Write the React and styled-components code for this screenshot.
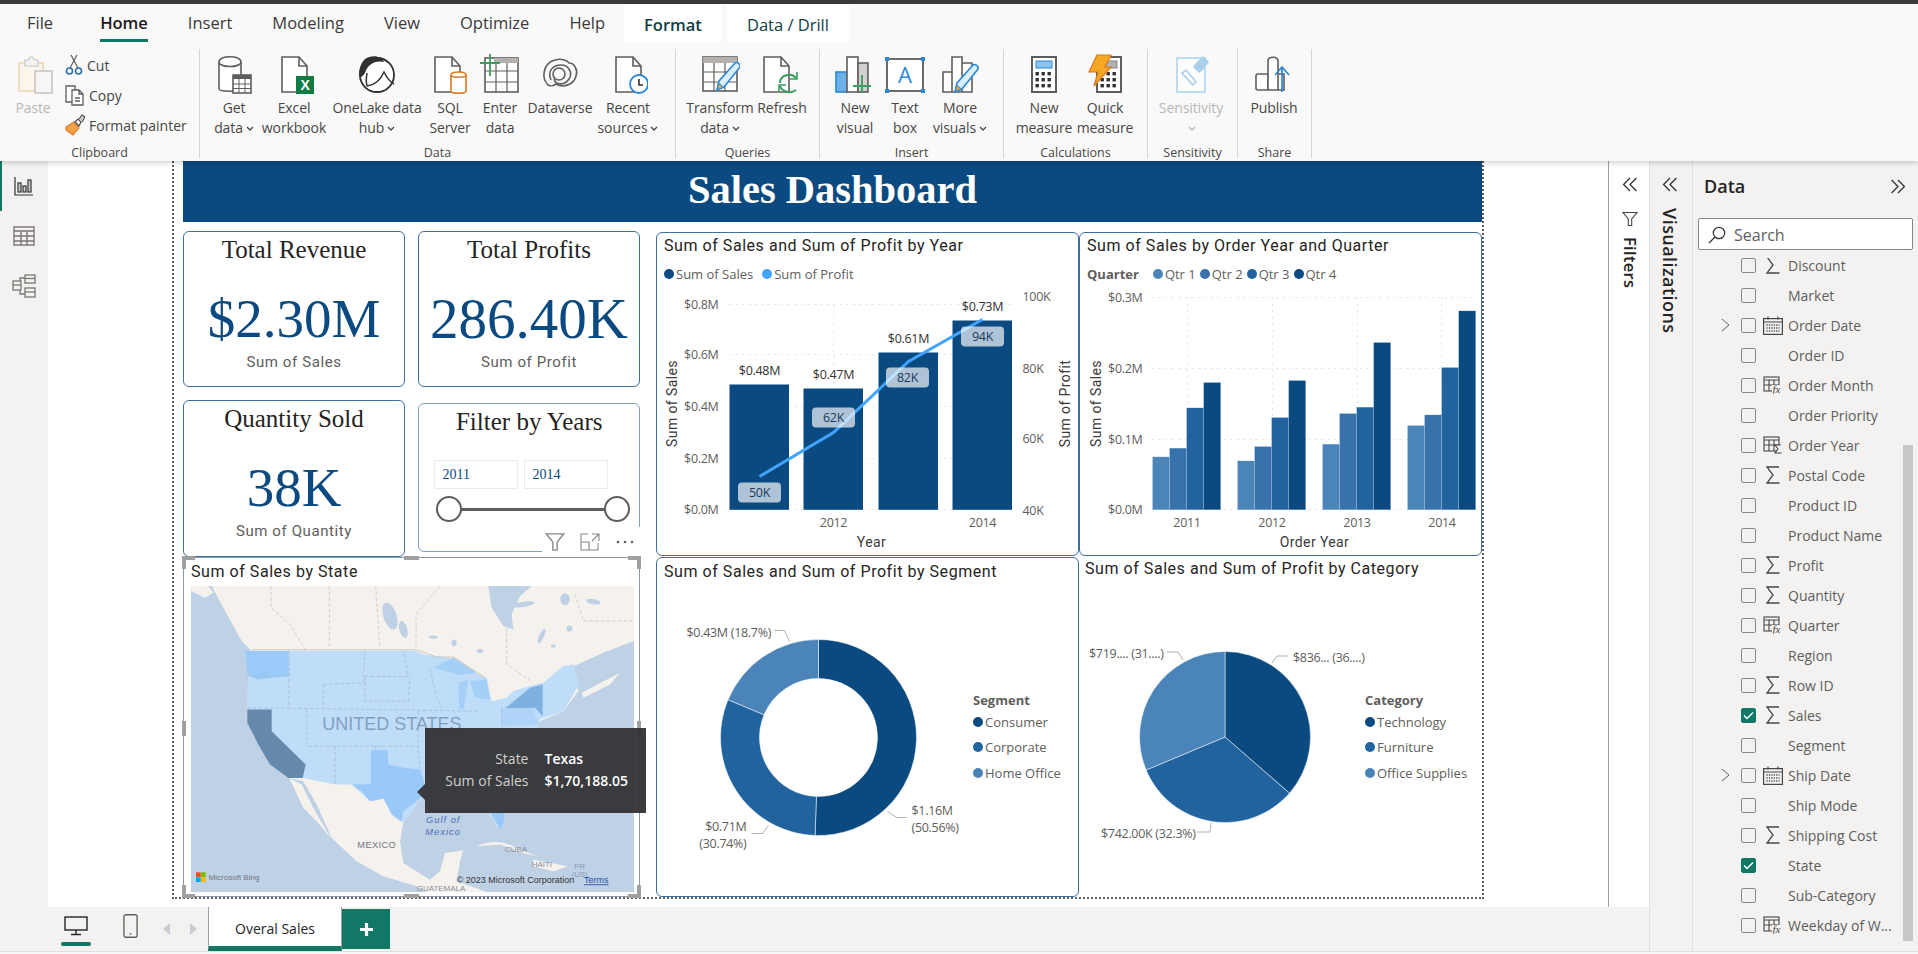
import React from "react";
import styled, { createGlobalStyle } from "styled-components";

const UI = `"Open Sans", "Noto Sans", sans-serif`;
const DIN = `Roboto, "Noto Sans", sans-serif`;
const SERIF = `"Liberation Serif", "DejaVu Serif", serif`;
const NAVY = "#0a4a80";
const INK = "#605e5c";
const GREEN = "#117865";

const Global = createGlobalStyle`
  html, body { margin: 0; padding: 0; background: #fff; overflow: hidden; }
  * { box-sizing: border-box; }
`;

const Page = styled.div`
  width: 1918px;
  height: 954px;
  display: flex;
  flex-direction: column;
  font-family: ${UI};
  color: #252423;
`;
const TopLine = styled.div`
  height: 4px;
  background: #3b3a39;
`;

/* ribbon */
const Ribbon = styled.header`
  height: 157px;
  background: #f9f9f9;
  box-shadow: 0 2px 5px rgba(0, 0, 0, 0.18);
  position: relative;
  z-index: 5;
`;
const TabRow = styled.nav`
  height: 38px;
  display: flex;
  align-items: stretch;
  gap: 40px;
  padding-left: 27px;
  font-size: 16.5px;
`;
const Tab = styled.div`
  display: flex;
  align-items: center;
  padding-top: 2px;
  color: ${(p) => (p.$active ? "#1b1a19" : "#3b3a39")};
  font-weight: ${(p) => (p.$active ? 600 : 400)};
  border-bottom: 3px solid ${(p) => (p.$active ? GREEN : "transparent")};
  margin-left: ${(p) => p.$shift || 0}px;
`;
const ContextTab = styled.div`
  display: flex;
  align-items: center;
  padding: 2px 20px 0;
  background: #fff;
  color: #0f3f46;
  font-weight: ${(p) => (p.$strong ? 600 : 500)};
  margin-left: ${(p) => p.$shift}px;
`;
const GroupRow = styled.div`
  display: flex;
  padding-top: 7px;
`;
const Group = styled.section`
  width: ${(p) => p.$w}px;
  height: 109px;
  border-right: 1px solid #d6d4d2;
  display: flex;
  flex-direction: column;
`;
const GroupBody = styled.div`
  flex: 1;
  display: flex;
  padding-left: ${(p) => p.$pad || 0}px;
`;
const GroupLabel = styled.div`
  height: 10px;
  line-height: 10px;
  font-size: 12.5px;
  text-align: center;
  color: #484644;
  white-space: nowrap;
`;
const RibbonBtn = styled.div`
  width: ${(p) => p.$w}px;
  display: flex;
  flex-direction: column;
  align-items: center;
  color: ${(p) => (p.$off ? "#b9b7b5" : "#484644")};
  font-size: 14px;
  line-height: 20px;
  text-align: center;
  white-space: nowrap;
  letter-spacing: -0.1px;
  svg.big {
    margin-top: 5px;
    margin-bottom: 4px;
    flex: none;
  }
`;
const SmallColumn = styled.div`
  display: flex;
  flex-direction: column;
  padding: 1px 0 0 7px;
`;
const SmallBtn = styled.div`
  height: 30px;
  display: flex;
  align-items: center;
  gap: 4px;
  font-size: 14px;
  color: #484644;
  white-space: nowrap;
`;
const Caret = () => (
  <svg width="8" height="6" viewBox="0 0 8 6" style={{ marginLeft: 3, verticalAlign: 1 }}>
    <path d="M1 1l3 3 3-3" fill="none" stroke="currentColor" strokeWidth="1.3" />
  </svg>
);

const Ico = ({ children, w = 40, h = 40 }) => (
  <svg className="big" width={w} height={h} viewBox={`0 0 ${w} ${h}`} fill="none" stroke={INK} strokeWidth="1.6">
    {children}
  </svg>
);
const Doc = ({ x = 0, y = 0, off }) => (
  <path
    d={`M${x + 8} ${y + 3}h17l8 9v26h-25z M${x + 25} ${y + 3}v9h8`}
    fill="#fff"
    stroke={off || INK}
  />
);
const MiniTable = ({ x, y, w = 18, h = 18 }) => (
  <g>
    <rect x={x} y={y} width={w} height={h} fill="#fff" />
    <rect x={x} y={y} width={w} height={4} fill={INK} stroke="none" />
    <path d={`M${x + w / 3} ${y + 4}v${h - 4}M${x + (2 * w) / 3} ${y + 4}v${h - 4}M${x} ${y + h * 0.5}h${w}M${x} ${y + h * 0.75}h${w}`} strokeWidth="1" />
  </g>
);
const Pencil = ({ x = 0, y = 0 }) => (
  <g transform={`translate(${x} ${y})`}>
    <path d="M3 36l2-9 16-18c2-1.5 6 1 5 4L10 33z" fill="#dceefa" stroke="#2b88d8" />
    <path d="M3 36l1.5-7 5 4z" fill="#c8a46a" stroke="#2b88d8" strokeWidth="1" />
  </g>
);
const IconGetData = () => (
  <Ico>
    <path d="M5 8c0-7 22-7 22 0v27c0 3-22 3-22 0z" fill="#fff" />
    <path d="M5 8c0 6 22 6 22 0" />
    <MiniTable x={19} y={21} />
  </Ico>
);
const IconExcel = () => (
  <Ico>
    <Doc />
    <rect x="22" y="22" width="18" height="18" fill="#107c41" stroke="none" />
    <text x="31" y="36" fill="#fff" stroke="none" fontFamily="Liberation Sans" fontWeight="700" fontSize="14" textAnchor="middle">X</text>
  </Ico>
);
const IconOneLake = () => (
  <Ico>
    <circle cx="20" cy="21" r="17" fill="#fff" strokeWidth="1.8" stroke="#323130" />
    <path d="M8 5c7-5 17-3 19 3-9-2-16 2-19 11-3 4-5 6-6 2 0-7 2-12 6-16z" fill="#323130" stroke="none" />
    <path d="M10 32c8-1 14-7 17-14 3 6 6 10 10 12M10 19c-1 6-1 10 0 13" strokeWidth="1.5" stroke="#323130" />
  </Ico>
);
const IconSql = () => (
  <Ico>
    <Doc x={-3} />
    <path d="M21 21c0-4 15-4 15 0v16c0 3-15 3-15 0z" fill="#fff" stroke="#d9791f" />
    <path d="M21 21c0 3 15 3 15 0" stroke="#d9791f" />
  </Ico>
);
const IconEnter = () => (
  <Ico>
    <rect x="5" y="4" width="33" height="34" fill="#fff" />
    <rect x="14" y="4" width="24" height="5" fill="#b3b0ad" stroke="none" />
    <path d="M16 9v29M27 9v29M5 17h33M5 28h33" strokeWidth="1.2" />
    <path d="M10 0v22M0 9h20" stroke="#3a9d5d" strokeWidth="1.8" />
  </Ico>
);
const IconDataverse = () => (
  <Ico>
    <path d="M8 31C1 24 3 9 15 6c7-2 13 1 14 3 6 0 9 8 7 13-2 9-13 12-20 8-4 3-6 2-8 1z" />
    <circle cx="19" cy="20" r="6" />
    <path d="M11 26c-4-9 2-15 10-15s12 8 8 14-13 7-15 0" />
  </Ico>
);
const IconRecent = () => (
  <Ico>
    <Doc />
    <circle cx="31" cy="30" r="9" fill="#fff" stroke="#2b88d8" strokeWidth="1.8" />
    <path d="M31 25v6h4" stroke="#323130" />
  </Ico>
);
const IconTransform = () => (
  <Ico>
    <rect x="3" y="3" width="34" height="34" fill="#fff" />
    <rect x="3" y="3" width="34" height="6" fill="#b3b0ad" stroke="none" />
    <path d="M14 9v28M25 9v28M3 18h34M3 28h34" strokeWidth="1.2" />
    <Pencil x={14} y={0} />
  </Ico>
);
const IconRefresh = () => (
  <Ico>
    <Doc x={-6} />
    <g stroke="#3a9d5d" strokeWidth="2">
      <path d="M18 29c0-8 11-11 16-5M34 36c-5 4-14 2-16-4" />
      <path d="M35 18v7h-7M17 38v-7h7" strokeWidth="1.6" />
    </g>
  </Ico>
);
const IconNewVisual = () => (
  <Ico>
    <rect x="1" y="18" width="11" height="20" fill="#6cb2e8" stroke="#2b88d8" />
    <rect x="12" y="3" width="11" height="35" fill="#fff" />
    <rect x="23" y="9" width="10" height="29" fill="#d2d0ce" />
    <path d="M27 21v18M18 32h18" stroke="#3a9d5d" strokeWidth="1.8" />
  </Ico>
);
const IconTextBox = () => (
  <Ico w={42}>
    <rect x="3" y="5" width="36" height="32" fill="#fff" stroke="#484644" />
    {[[3, 5], [39, 5], [3, 37], [39, 37]].map(([x, y]) => (
      <rect key={x + "-" + y} x={x - 2} y={y - 2} width="4" height="4" fill="#2b88d8" stroke="none" />
    ))}
    <text x="21" y="29" fill="#2b88d8" stroke="none" fontFamily="Open Sans" fontSize="22" textAnchor="middle">A</text>
  </Ico>
);
const IconMoreVisuals = () => (
  <Ico>
    <path d="M3 38V18h9v20zM12 38V3h10v35zM22 38V9h10v29z" fill="#fff" />
    <Pencil x={12} y={2} />
  </Ico>
);
const Calc = ({ x, screen }) => (
  <g transform={`translate(${x} 3)`}>
    <rect width="24" height="35" fill="#fff" strokeWidth="2" />
    <rect x="4" y="4" width="16" height="7" fill={screen} stroke={screen === "#b3b0ad" ? "#8a8886" : "#2b88d8"} strokeWidth="1" />
    {[15, 21, 27].map((y) =>
      [5, 11, 17].map((cx) => <rect key={y + "-" + cx} x={cx - 1.5} y={y} width="3.4" height="3.4" fill="#323130" stroke="none" />)
    )}
  </g>
);
const IconNewMeasure = () => (
  <Ico>
    <Calc x={8} screen="#8cc3ee" />
  </Ico>
);
const IconQuickMeasure = () => (
  <Ico>
    <Calc x={12} screen="#b3b0ad" />
    <path d="M12 1h14l-6 12h6L9 32l4-14H4z" fill="#f7a823" stroke="#d9791f" strokeWidth="1.2" />
  </Ico>
);
const IconSensitivity = () => (
  <Ico>
    <rect x="6" y="4" width="28" height="34" fill="#fdfdfd" stroke="#bcdcf2" strokeWidth="2" />
    <path d="M15 16l10 12-3 3-11-12z" fill="#fff" stroke="#a8d0ec" />
    <path d="M24 10l8-8 6 6-6 8-4 3-6-6z" fill="#a8d0ec" stroke="none" />
  </Ico>
);
const IconPublish = () => (
  <Ico>
    <rect x="2" y="20" width="12" height="16" rx="2" fill="#fff" />
    <path d="M14 36V7c0-5 10-5 10 0v29z" fill="#fff" />
    <path d="M24 20h6v16h-6" />
    <path d="M28 38V14M21 21l7-8 7 8" stroke="#2b88d8" strokeWidth="1.7" />
  </Ico>
);
const IconPaste = () => (
  <Ico>
    <g transform="translate(5 0)">
      <path d="M1 9h24v28H1z" fill="#fbf5ec" stroke="#f0dcc0" strokeWidth="2" />
      <path d="M7 9V6h4c0-4 5-4 5 0h4v6H7z" fill="#f6f4f2" stroke="#d5d3d1" />
      <rect x="17" y="17" width="17" height="22" fill="#f6f6f6" stroke="#c8c6c4" />
    </g>
  </Ico>
);
const IconCut = () => (
  <svg width="18" height="22" viewBox="0 0 18 22" fill="none" stroke={INK} strokeWidth="1.2">
    <path d="M5 14L12 1M13 14L6 1" />
    <circle cx="4.5" cy="17" r="3" stroke="#2b6ea8" strokeWidth="1.6" />
    <circle cx="13.5" cy="17" r="3" stroke="#2b6ea8" strokeWidth="1.6" />
  </svg>
);
const IconCopy = () => (
  <svg width="20" height="22" viewBox="0 0 20 22" fill="#fff" stroke={INK} strokeWidth="1.3">
    <path d="M1 2h9v16H1z" />
    <path d="M7 6h7l4 4v11H7zM14 6v4h4M10 14h5M10 17h5" />
  </svg>
);
const IconPainter = () => (
  <svg width="20" height="22" viewBox="0 0 20 22" stroke="#484644" strokeWidth="1.1">
    <path d="M1 13l8-5 5 6-6 7-7-5z" fill="#f7a04a" stroke="#d9791f" />
    <path d="M10 8l3-3 3 3-2 4z" fill="#fff" />
    <path d="M14 5l3-4 3 2-3 5" fill="#d2d0ce" />
  </svg>
);

/* main area */
const Main = styled.main`
  flex: 1;
  display: flex;
  min-height: 0;
`;
const LeftPart = styled.div`
  width: 1649px;
  display: flex;
  flex-direction: column;
`;
const WorkRow = styled.div`
  height: 746px;
  display: flex;
`;
const NavRail = styled.aside`
  width: 48px;
  background: #f3f2f1;
`;
const NavItem = styled.div`
  height: 50px;
  display: flex;
  align-items: center;
  justify-content: center;
  border-left: 2px solid ${(p) => (p.$on ? GREEN : "transparent")};
  padding-right: 2px;
`;
const Canvas = styled.div`
  width: 1560px;
  background: #fff;
  padding-left: 124px;
`;
const Report = styled.div`
  width: 1312px;
  height: 738px;
  border: 2px dotted #605e5c;
  border-top: 0;
  padding-left: 9px;
`;
const Banner = styled.h1`
  margin: 0;
  height: 61px;
  background: ${NAVY};
  color: #fff;
  font: 700 40.5px/58px ${SERIF};
  text-align: center;
`;
const ReportGrid = styled.div`
  margin-top: 9px;
  display: grid;
  grid-template-columns: 473px 423px 403px;
  grid-template-rows: 326px 340px;
`;
const KpiGrid = styled.div`
  width: 457px;
  display: grid;
  grid-template-columns: 222px 222px;
  grid-template-rows: 156px 157px;
  gap: 13px;
`;
const Card = styled.article`
  border: 1.5px solid #3f6f9f;
  border-radius: 6px;
  background: #fff;
  display: flex;
  flex-direction: column;
  min-width: 0;
`;
const Kpi = styled(Card)`
  align-items: center;
  padding-top: 3px;
  white-space: nowrap;
`;
const KpiTitle = styled.div`
  font: 25px/30px ${SERIF};
  color: #252423;
`;
const KpiValue = styled.div`
  margin-top: 24px;
  font: ${(p) => p.$size}px/60px ${SERIF};
  color: ${NAVY};
`;
const KpiSub = styled.div`
  margin-top: 3px;
  font: 15px/20px ${DIN};
  letter-spacing: 0.6px;
  color: ${INK};
`;
const FilterCard = styled(Card)`
  margin: 3px 0 5px;
  border-color: #7d9fc4;
  padding: 3px 0 0 14.5px;
`;
const FilterTitle = styled(KpiTitle)`
  text-align: center;
  padding-right: 14px;
`;
const YearInputs = styled.div`
  margin-top: 23px;
  display: flex;
  gap: 6px;
`;
const YearBox = styled.div`
  width: 84px;
  height: 29px;
  border: 1px solid #edebe9;
  padding-left: 8px;
  font: 14px/27px ${SERIF};
  color: ${NAVY};
`;
const Slider = styled.div`
  position: relative;
  margin: 7px 0 0 2px;
  width: 194px;
  height: 26px;
  &::before {
    content: "";
    position: absolute;
    left: 13px;
    right: 13px;
    top: 12px;
    height: 2.5px;
    background: #605e5c;
  }
`;
const Thumb = styled.span`
  position: absolute;
  top: 0;
  ${(p) => (p.$right ? "right: 0;" : "left: 0;")}
  width: 26px;
  height: 26px;
  border-radius: 50%;
  border: 2px solid #605e5c;
  background: #fff;
`;

const VisualCard = styled(Card)`
  margin: ${(p) => p.$margin || 0};
  ${(p) => p.$bare && "border: 0; border-radius: 0; background: transparent;"}
`;
const VisualTitle = styled.div`
  padding: ${(p) => p.$top || 0}px 0 0 ${(p) => p.$left || 7}px;
  font: 400 16px/23px ${DIN};
  letter-spacing: 0.55px;
  color: #252423;
  white-space: nowrap;
`;
const TopLegend = styled.div`
  height: 30px;
  padding: 4px 0 0 7px;
  display: flex;
  align-items: center;
  font: 13px/20px ${UI};
  color: ${INK};
  gap: ${(p) => p.$gap}px;
  b {
    font-weight: 700;
    margin-right: 10px;
  }
`;
const LegendItem = styled.span`
  display: inline-flex;
  align-items: center;
  gap: 2px;
  white-space: nowrap;
  &::before {
    content: "";
    width: 10px;
    height: 10px;
    border-radius: 50%;
    background: ${(p) => p.$c};
  }
`;
const ChartRow = styled.div`
  flex: 1;
  display: flex;
  min-height: 0;
`;
const SideLegend = styled.div`
  padding-top: ${(p) => p.$top}px;
  display: flex;
  flex-direction: column;
  gap: 5.5px;
  font: 13px/20px ${UI};
  color: ${INK};
  b {
    font-weight: 700;
    color: #605e5c;
    margin-bottom: -4px;
  }
`;
const Plot = styled.svg`
  display: block;
  flex: none;
`;
const Tx = styled.text`
  font-family: ${UI};
  font-size: 12.5px;
  letter-spacing: -0.3px;
  fill: ${(p) => p.$c || INK};
`;
const AxisTitle = styled.text`
  font-family: ${DIN};
  font-size: 14px;
  letter-spacing: 0.4px;
  fill: #3b3a39;
`;
const Grid = styled.path`
  stroke: #dcdcdc;
  stroke-width: 1;
  stroke-dasharray: 1.5 5;
  fill: none;
`;

/* chart 1 */
const YEAR_BARS = [
  { x: 730, top: 385, label: "$0.48M", ly: 371 },
  { x: 804, top: 389, label: "$0.47M", ly: 375 },
  { x: 879, top: 353, label: "$0.61M", ly: 339 },
  { x: 953, top: 321, label: "$0.73M", ly: 307 },
];
const BADGES = [
  { t: "50K", x: 760, y: 493 },
  { t: "62K", x: 834, y: 418 },
  { t: "82K", x: 908, y: 378 },
  { t: "94K", x: 983, y: 337 },
];
const YearChart = () => (
  <Plot width="420" height="267" viewBox="657.5 287.5 420 267">
    <Grid d="M730 305H1013M730 355H1013M730 407H1013M730 459H1013M730 510H1013M834 305V510M983 305V510" />
    {YEAR_BARS.map((b) => (
      <rect key={b.x} x={b.x} y={b.top} width="59.5" height={510.3 - b.top} fill={NAVY} />
    ))}
    {YEAR_BARS.map((b) => (
      <Tx key={b.label} x={b.x + 30} y={b.ly + 4.5} textAnchor="middle" $c="#323130">{b.label}</Tx>
    ))}
    <polyline points="760,477 834,433 909,362 983,320" fill="none" stroke="#41a4ff" strokeWidth="3" />
    {BADGES.map((b) => (
      <g key={b.t}>
        <rect x={b.x - 21.5} y={b.y - 10} width="43" height="20" rx="4" fill="#fff" opacity="0.67" />
        <Tx x={b.x} y={b.y + 4.5} textAnchor="middle" $c="#1f3b5c">{b.t}</Tx>
      </g>
    ))}
    {[["$0.8M", 305], ["$0.6M", 355], ["$0.4M", 407], ["$0.2M", 459], ["$0.0M", 510]].map(([t, y]) => (
      <Tx key={t} x="719" y={y + 4.5} textAnchor="end">{t}</Tx>
    ))}
    {[["100K", 297], ["80K", 369], ["60K", 439], ["40K", 511]].map(([t, y]) => (
      <Tx key={t} x="1023" y={y + 4.5}>{t}</Tx>
    ))}
    <Tx x="834" y="527.5" textAnchor="middle">2012</Tx>
    <Tx x="983" y="527.5" textAnchor="middle">2014</Tx>
    <AxisTitle x="872" y="547" textAnchor="middle">Year</AxisTitle>
    <AxisTitle transform="translate(677 404) rotate(-90)" textAnchor="middle">Sum of Sales</AxisTitle>
    <AxisTitle transform="translate(1070 404) rotate(-90)" textAnchor="middle">Sum of Profit</AxisTitle>
  </Plot>
);

/* chart 2 */
const QTR_COLORS = ["#4a84b9", "#3872ad", "#21639e", NAVY];
const QTR_GROUPS = [
  { year: "2011", x: 1153, tops: [712, 686, 565, 489] },
  { year: "2012", x: 1238, tops: [724, 681, 594, 483] },
  { year: "2013", x: 1323, tops: [674, 582, 563, 369] },
  { year: "2014", x: 1408, tops: [618, 586, 444, 274] },
];
const QuarterChart = () => (
  <Plot width="400" height="267" viewBox="1080.5 287.5 400 267">
    <Grid d="M1153 298H1476M1153 369H1476M1153 440H1476M1153 510H1476M1188 298V510M1273 298V510M1358 298V510M1442 298V510" />
    {QTR_GROUPS.map((g) => (
      <g key={g.year}>
        {g.tops.map((t, i) => (
          <rect key={i} x={g.x + i * 17.05} y={220 + t / 3} width="17.05" height={510.3 - 220 - t / 3} fill={QTR_COLORS[i]} stroke="#ffffff" strokeOpacity="0.25" strokeWidth="0.6" />
        ))}
        <Tx x={g.x + 34.5} y="527.5" textAnchor="middle">{g.year}</Tx>
      </g>
    ))}
    {[["$0.3M", 298], ["$0.2M", 369], ["$0.1M", 440], ["$0.0M", 510]].map(([t, y]) => (
      <Tx key={t} x="1143" y={y + 4.5} textAnchor="end">{t}</Tx>
    ))}
    <AxisTitle x="1315" y="547" textAnchor="middle">Order Year</AxisTitle>
    <AxisTitle transform="translate(1101 404) rotate(-90)" textAnchor="middle">Sum of Sales</AxisTitle>
  </Plot>
);

/* pie helpers */
const polar = (cx, cy, r, f) => {
  const a = f * Math.PI * 2 - Math.PI / 2;
  return [cx + r * Math.cos(a), cy + r * Math.sin(a)];
};
const slice = (cx, cy, R, r, from, to) => {
  const large = to - from > 0.5 ? 1 : 0;
  const [x1, y1] = polar(cx, cy, R, from);
  const [x2, y2] = polar(cx, cy, R, to);
  if (!r) return `M${cx} ${cy}L${x1} ${y1}A${R} ${R} 0 ${large} 1 ${x2} ${y2}Z`;
  const [x3, y3] = polar(cx, cy, r, to);
  const [x4, y4] = polar(cx, cy, r, from);
  return `M${x1} ${y1}A${R} ${R} 0 ${large} 1 ${x2} ${y2}L${x3} ${y3}A${r} ${r} 0 ${large} 0 ${x4} ${y4}Z`;
};
const Leader = styled.polyline`
  fill: none;
  stroke: #b3b0ad;
  stroke-width: 1;
`;
const SLICE_COLORS = [NAVY, "#21639e", "#4a84b9"];

const DonutChart = () => (
  <Plot width="316" height="312" viewBox="657.5 583.5 316 312">
    <path d={slice(819, 738, 98, 59, 0, 0.5056)} fill={SLICE_COLORS[0]} stroke="#fff" strokeWidth="0.5" />
    <path d={slice(819, 738, 98, 59, 0.5056, 0.813)} fill={SLICE_COLORS[1]} stroke="#fff" strokeWidth="0.5" />
    <path d={slice(819, 738, 98, 59, 0.813, 1)} fill={SLICE_COLORS[2]} stroke="#fff" strokeWidth="0.5" />
    <Leader points="775,631 785,631 790,642" />
    <Leader points="888,812 897,818 907,818" />
    <Leader points="769,826 763,834 752,834" />
    <Tx x="687" y="637.5">$0.43M (18.7%)</Tx>
    <Tx x="912" y="815.5">$1.16M</Tx>
    <Tx x="912" y="832.5">(50.56%)</Tx>
    <Tx x="747" y="831.5" textAnchor="end">$0.71M</Tx>
    <Tx x="747" y="848.5" textAnchor="end">(30.74%)</Tx>
  </Plot>
);
const PieChart = () => (
  <Plot width="286" height="317" viewBox="1079 580 286 317">
    <path d={slice(1225, 737, 85.5, 0, 0, 0.364)} fill={SLICE_COLORS[0]} stroke="#fff" strokeWidth="0.5" />
    <path d={slice(1225, 737, 85.5, 0, 0.364, 0.687)} fill={SLICE_COLORS[1]} stroke="#fff" strokeWidth="0.5" />
    <path d={slice(1225, 737, 85.5, 0, 0.687, 1)} fill={SLICE_COLORS[2]} stroke="#fff" strokeWidth="0.5" />
    <Leader points="1272,663 1277,656 1288,656" />
    <Leader points="1167,652 1178,652 1183,660" />
    <Leader points="1197,832 1210,832 1211,823" />
    <Tx x="1293" y="661.5" letterSpacing="-0.5">$836... (36....)</Tx>
    <Tx x="1089" y="657.5">$719.... (31....)</Tx>
    <Tx x="1101" y="837.5">$742.00K (32.3%)</Tx>
  </Plot>
);

/* map */
const MapCard = styled(Card)`
  position: relative;
  width: 457px;
  border-color: #8c99a8;
  border-radius: 0;
`;
const MapFrame = styled.svg`
  display: block;
  margin: 3px 0 0 6.5px;
`;
const MapText = styled.text`
  font-family: "Liberation Sans", sans-serif;
  font-size: ${(p) => p.$s || 30}px;
  fill: ${(p) => p.$c || "#6f7780"};
  font-style: ${(p) => (p.$i ? "italic" : "normal")};
  letter-spacing: ${(p) => p.$ls || 0}px;
`;
const STATE_LINES = [
  "M357 298V470", "M232 470L410 472L920 480", "M460 400L580 395L585 300", "M585 376H715L700 300",
  "M460 400V472", "M585 376V450H715L720 376", "M410 472V585H745L750 655", "M495 585V700", "M617 585V597",
  "M745 480V585", "M780 350L800 440L815 470", "M232 375H357", "M995 470V525",
];
const WATER = "#bed1e5";
const LAKES = [
  [660, 195, 20, 42, -18], [700, 235, 12, 26, -15], [790, 258, 14, 5, 0], [852, 275, 8, 10, 0],
  [1060, 160, 34, 8, -8], [1185, 145, 14, 18, 0], [1270, 152, 22, 8, 10], [1115, 255, 7, 24, 25],
  [1198, 232, 9, 9, 0], [930, 300, 10, 6, 0], [1150, 285, 8, 5, 0],
];
const UsMap = () => (
  <MapFrame width="443" height="306" viewBox="63 105 1329 917" preserveAspectRatio="none">
    <rect x="63" y="105" width="1329" height="917" fill={WATER} />
    <path
      d="M125 105L160 170L215 270L245 300L225 310L235 370L232 470L240 520L275 590L300 640L355 680L400 690L440 760L485 860L560 930L640 975L740 1005L770 1022H950L860 990L870 930L880 897L825 905L810 960L780 985L700 935L690 870L700 812L750 745L770 735L850 745L950 770L985 830L1003 810L990 740L1050 640L1110 510L1180 480L1225 420L1212 345L1300 305L1392 270V105Z"
      fill="#f5f2ee"
    />
    <path d="M63 105H115L130 125L105 140L63 120Z" fill="#f5f2ee" />
    <path d="M358 680L395 700L430 770L485 865L440 810L400 770Z" fill="#f5f2ee" />
    <path d="M920 885Q980 860 1030 885L1100 915L1060 905L990 880Z" fill="#f5f2ee" />
    <path d="M1090 925L1195 945L1150 960L1090 945Z" fill="#f5f2ee" />
    <path d="M1235 425L1350 365L1320 400L1240 440Z" fill="#f5f2ee" />
    {/* water inside the land */}
    <path d="M955 105H1085L1050 135L1025 190L1030 235L1000 225L965 170Z" fill={WATER} />
    {LAKES.map(([cx, cy, rx, ry, rot]) => (
      <ellipse key={cx} cx={cx} cy={cy} rx={rx} ry={ry} fill={WATER} transform={`rotate(${rot} ${cx} ${cy})`} />
    ))}
    {/* states */}
    <path
      d="M225 300L735 298L760 310L840 320L900 360L950 380L965 450L1010 440L1030 420L1095 400L1120 395L1180 345L1210 340L1228 400L1180 480L1110 505L1100 540L1050 640L990 740L1003 800L990 835L960 790L950 770L850 745L770 735L750 745L700 812L650 740L600 750L545 700H495L400 680H355L300 640L275 590L240 520L232 470L235 370Z"
      fill="#bfdcf8"
    />
    <path d="M225 300H355L357 375L260 385L232 370Z" fill="#9acbf8" />
    <path d="M232 475H305V540L407 640L398 680H355L300 640L265 580L232 515Z" fill="#6688ab" />
    <path d="M603 597H653L655 640L700 650L750 655L762 690L765 730L700 780L695 812L665 790L640 742L600 750L575 720L545 700H603Z" fill="#98c9f9" />
    <path d="M1005 472L1080 410L1118 400V495L1095 470Z" fill="#7eb0e0" />
    <path d="M993 472H1090L1105 520L995 525Z" fill="#b0d3f8" />
    <path d="M960 780H1003L1003 810L990 835Z" fill="#98c9f9" />
    <path d="M790 350L850 320L920 365L870 372Z" fill="#a4cff6" />
    <path d="M865 395L895 385L880 475L868 470Z M900 390L950 385L960 445L915 440Z" fill="#a4cff6" />
    {STATE_LINES.map((d) => (
      <path key={d} d={d} fill="none" stroke="#9db7d2" strokeWidth="2" strokeDasharray="11 6" />
    ))}
    <path d="M303 105V170L360 220L405 295M478 105V295M617 105L630 295M810 105L738 190V290M1010 230V340L1090 395M1215 130L1240 210H1392" fill="none" stroke="#c4bcb4" strokeWidth="2" strokeDasharray="11 6" />
    <path d="M245 296H740L800 318H850L945 380" fill="none" stroke="#cfc9c2" strokeWidth="3" />
    <MapText x="457" y="537" $s={54} $c="rgba(88,118,150,0.6)">UNITED STATES</MapText>
    <MapText x="768" y="815" $s={28} $c="#4c6fb5" $i $ls={3}>Gulf of</MapText>
    <MapText x="766" y="851" $s={28} $c="#4c6fb5" $i $ls={3}>Mexico</MapText>
    <MapText x="562" y="890" $s={28} $ls={1}>MEXICO</MapText>
    <MapText x="1005" y="902" $s={24} $c="#8a8f96">CUBA</MapText>
    <MapText x="1085" y="946" $s={24} $c="#8a8f96">HAITI</MapText>
    <MapText x="1213" y="952" $s={23} $c="#8a9bb0">PR</MapText>
    <MapText x="1205" y="976" $s={23} $c="#8a9bb0">(US)</MapText>
    <MapText x="740" y="1019" $s={24} $c="#8a8f96">GUATEMALA</MapText>
    <MapText x="116" y="987" $s={24} $c="#6f7780">Microsoft Bing</MapText>
    <rect x="78" y="963" width="14" height="14" fill="#f25022" />
    <rect x="93" y="963" width="14" height="14" fill="#7fba00" />
    <rect x="78" y="978" width="14" height="14" fill="#00a4ef" />
    <rect x="93" y="978" width="14" height="14" fill="#ffb900" />
    <MapText x="860" y="996" $s={27} $c="#333">© 2023 Microsoft Corporation</MapText>
    <MapText x="1242" y="996" $s={27} $c="#2a4fa8" textDecoration="underline">Terms</MapText>
  </MapFrame>
);
const Handle = styled.span`
  position: absolute;
  background: #a0a0a0;
  ${(p) => p.$place}
`;
const HANDLES = [
  "left:-2px;top:-2px;width:13px;height:4px;",
  "left:-2px;top:-2px;width:4px;height:13px;",
  "right:-2px;top:-2px;width:13px;height:4px;",
  "right:-2px;top:-2px;width:4px;height:13px;",
  "left:-2px;bottom:-2px;width:13px;height:4px;",
  "left:-2px;bottom:-2px;width:4px;height:13px;",
  "right:-2px;bottom:-2px;width:13px;height:4px;",
  "right:-2px;bottom:-2px;width:4px;height:13px;",
  "left:220px;top:-2px;width:15px;height:4px;",
  "left:220px;bottom:-2px;width:15px;height:4px;",
  "left:-2px;top:163px;width:4px;height:15px;",
  "right:-2px;top:163px;width:4px;height:15px;",
];
const HoverBar = styled.div`
  position: absolute;
  top: -31px;
  right: -1.5px;
  width: 99px;
  height: 30px;
  background: #fff;
  display: flex;
  align-items: center;
  gap: 15px;
  padding-left: 3px;
  color: #8a8886;
`;
const Tooltip = styled.div`
  position: absolute;
  left: 240.5px;
  top: 169.5px;
  width: 221px;
  height: 85px;
  background: rgba(54, 54, 56, 0.97);
  display: grid;
  grid-template-columns: 104px auto;
  align-content: center;
  column-gap: 16px;
  font-size: 14px;
  line-height: 22px;
  color: #d2d0ce;
  &::before {
    content: "";
    position: absolute;
    left: -8px;
    top: 56px;
    border: 8px solid transparent;
    border-left: 0;
    border-right-color: rgba(54, 54, 56, 0.97);
  }
  span {
    text-align: right;
    white-space: nowrap;
  }
  b {
    color: #fff;
    font-weight: 600;
    white-space: nowrap;
  }
`;

/* right panes */
const FilterRail = styled.div`
  width: 41px;
  background: #fff;
  border-left: 1px solid #a19f9d;
  display: flex;
  flex-direction: column;
  align-items: center;
  padding: 16px 0 0 1px;
`;
const VizRail = styled.div`
  width: 44px;
  background: #f3f2f1;
  border-left: 1px solid #e1dfdd;
  border-right: 1px solid #e1dfdd;
  display: flex;
  flex-direction: column;
  align-items: center;
  padding: 16px 3px 0 0;
`;
const VerticalLabel = styled.div`
  writing-mode: vertical-rl;
  font-weight: 600;
  font-size: ${(p) => p.$size}px;
  letter-spacing: ${(p) => p.$ls || 0}px;
  line-height: 20px;
  color: #252423;
  margin-top: ${(p) => p.$top}px;
`;
const DataPane = styled.aside`
  flex: 1;
  background: #f3f2f1;
  display: flex;
  flex-direction: column;
  position: relative;
`;
const DataHead = styled.div`
  height: 57px;
  padding: 12px 11px 0 11px;
  display: flex;
  justify-content: space-between;
  align-items: flex-start;
  font-size: 18px;
  line-height: 26px;
  font-weight: 600;
  svg {
    margin-top: 6px;
  }
`;
const SearchBox = styled.div`
  margin-left: 5px;
  width: 215px;
  height: 32px;
  background: #fff;
  border: 1px solid #8a8886;
  border-radius: 2px;
  display: flex;
  align-items: center;
  gap: 8px;
  padding: 1px 0 0 9px;
  font-size: 16px;
  color: ${INK};
`;
const FieldList = styled.div`
  margin-top: 8px;
  height: 693px;
  overflow: hidden;
`;
const FieldRows = styled.div`
  margin-top: -8px;
`;
const FieldRow = styled.div`
  height: 30px;
  display: flex;
  align-items: center;
  padding-left: 48px;
  font-size: 14px;
  color: ${INK};
  white-space: nowrap;
`;
const Expander = styled.span`
  width: 14px;
  flex: none;
  margin-left: -20px;
  margin-right: 6px;
  display: flex;
  visibility: ${(p) => (p.$on ? "visible" : "hidden")};
`;
const Check = styled.span`
  width: 15px;
  height: 15px;
  flex: none;
  border-radius: 2px;
  border: 1px solid ${(p) => (p.$on ? GREEN : "#8a8886")};
  background: ${(p) => (p.$on ? GREEN : "transparent")};
  display: flex;
  align-items: center;
  justify-content: center;
`;
const TypeIcon = styled.span`
  width: 20px;
  height: 20px;
  flex: none;
  margin: 0 5px 0 7px;
  display: flex;
  align-items: center;
  justify-content: center;
`;
const ScrollThumb = styled.div`
  position: absolute;
  left: 210px;
  top: 284px;
  width: 10px;
  height: 496px;
  background: #c8c8c8;
`;

const Sigma = () => (
  <svg width="16" height="18" viewBox="0 0 16 18" fill="none" stroke="#484644" strokeWidth="1.3">
    <path d="M14 1H2l6 8-6 8h12.5" />
  </svg>
);
const Calendar = () => (
  <svg width="20" height="19" viewBox="0 0 20 19" fill="none" stroke="#484644" strokeWidth="1.2">
    <rect x="0.6" y="2.6" width="18.8" height="15.8" />
    <path d="M0.6 6h18.8M5 0.5v3M15 0.5v3" />
    <path d="M3.5 9h13M3.5 12h13M3.5 15h13" strokeDasharray="1.2 1.2" strokeWidth="1.4" />
  </svg>
);
const TableMark = ({ mark }) => (
  <svg width="20" height="18" viewBox="0 0 20 18" fill="none" stroke="#484644" strokeWidth="1.1">
    <rect x="1" y="1" width="15" height="14" />
    <path d="M1 4h15M6 4v11M11 4v11M1 9h15" />
    {mark === "fx" ? (
      <g>
        <rect x="9" y="9" width="11" height="9" fill="#f3f2f1" stroke="none" />
        <text x="9.5" y="17" fontFamily="Liberation Serif" fontStyle="italic" fontSize="11" fill="#484644" stroke="none">fx</text>
      </g>
    ) : (
      <path d="M18 9h-6l3 4-3 4h6.5" fill="#f3f2f1" strokeWidth="1.1" />
    )}
  </svg>
);
const FIELDS = [
  ["Discount", "sum"], ["Market"], ["Order Date", "cal", true], ["Order ID"], ["Order Month", "fx"], ["Order Priority"],
  ["Order Year", "ts"], ["Postal Code", "sum"], ["Product ID"], ["Product Name"], ["Profit", "sum"], ["Quantity", "sum"],
  ["Quarter", "fx"], ["Region"], ["Row ID", "sum"], ["Sales", "sum", false, true], ["Segment"], ["Ship Date", "cal", true],
  ["Ship Mode"], ["Shipping Cost", "sum"], ["State", null, false, true], ["Sub-Category"], ["Weekday of W...", "fx"],
];
const typeIcon = (t) => {
  if (t === "sum") return <Sigma />;
  if (t === "cal") return <Calendar />;
  if (t === "fx") return <TableMark mark="fx" />;
  if (t === "ts") return <TableMark mark="sum" />;
  return null;
};
const DoubleChevron = ({ right }) => (
  <svg width="18" height="15" viewBox="0 0 16 14" fill="none" stroke="#323130" strokeWidth="1.2" style={right ? { transform: "scaleX(-1)" } : undefined}>
    <path d="M8 1L2 7l6 6M14 1L8 7l6 6" />
  </svg>
);
const Funnel = ({ c = "#484644", s = 16 }) => (
  <svg width={s} height={s} viewBox="0 0 16 16" fill="none" stroke={c} strokeWidth="1.1">
    <path d="M1 1.5h14L9.7 8v6.5H6.3V8z" />
  </svg>
);

/* bottom bar */
const BottomBar = styled.footer`
  height: 44px;
  background: #f3f2f1;
  display: flex;
  align-items: stretch;
  padding-left: 61px;
`;
const ViewBtn = styled.div`
  width: ${(p) => p.$w}px;
  position: relative;
  display: flex;
  justify-content: center;
  padding-top: ${(p) => p.$top}px;
  margin-right: ${(p) => p.$mr}px;
`;
const ViewMark = styled.span`
  position: absolute;
  left: 0;
  top: 35px;
  width: 30px;
  height: 4px;
  border-radius: 2px;
  background: ${GREEN};
`;
const Pager = styled.div`
  width: 70px;
  display: flex;
  align-items: center;
  padding-left: 25px;
  gap: 20px;
`;
const PageTab = styled.div`
  width: 134px;
  background: #fff;
  border-left: 1px solid #a19f9d;
  border-right: 1px solid #a19f9d;
  border-bottom: 5px solid ${GREEN};
  text-align: center;
  font-size: 14px;
  line-height: 44px;
  color: #252423;
`;
const AddPage = styled.div`
  width: 48px;
  height: 40px;
  margin-top: 2px;
  background: ${GREEN};
  display: flex;
  align-items: center;
  justify-content: center;
`;
const StatusEdge = styled.div`
  height: 3px;
  background: #f7f7f7;
  border-top: 1px solid #e1dfdd;
`;

export default function App() {
  return (
    <Page>
      <Global />
      <TopLine />
      <Ribbon>
        <TabRow>
          <Tab>File</Tab>
          <Tab $active $shift={7}>Home</Tab>
          <Tab>Insert</Tab>
          <Tab>Modeling</Tab>
          <Tab>View</Tab>
          <Tab>Optimize</Tab>
          <Tab>Help</Tab>
          <ContextTab $strong $shift={-21}>Format</ContextTab>
          <ContextTab $shift={-35}>Data / Drill</ContextTab>
        </TabRow>
        <GroupRow>
          <Group $w={200}>
            <GroupBody $pad={8}>
              <RibbonBtn $w={50} $off>
                <IconPaste />
                Paste
              </RibbonBtn>
              <SmallColumn>
                <SmallBtn><IconCut /><span>Cut</span></SmallBtn>
                <SmallBtn><IconCopy /><span>Copy</span></SmallBtn>
                <SmallBtn><IconPainter /><span>Format painter</span></SmallBtn>
              </SmallColumn>
            </GroupBody>
            <GroupLabel>Clipboard</GroupLabel>
          </Group>
          <Group $w={476}>
            <GroupBody $pad={8}>
              <RibbonBtn $w={52}><IconGetData /><span>Get<br />data<Caret /></span></RibbonBtn>
              <RibbonBtn $w={68}><IconExcel /><span>Excel<br />workbook</span></RibbonBtn>
              <RibbonBtn $w={98}><IconOneLake /><span>OneLake data<br />hub<Caret /></span></RibbonBtn>
              <RibbonBtn $w={48}><IconSql /><span>SQL<br />Server</span></RibbonBtn>
              <RibbonBtn $w={52}><IconEnter /><span>Enter<br />data</span></RibbonBtn>
              <RibbonBtn $w={68}><IconDataverse /><span>Dataverse</span></RibbonBtn>
              <RibbonBtn $w={68}><IconRecent /><span>Recent<br />sources<Caret /></span></RibbonBtn>
            </GroupBody>
            <GroupLabel>Data</GroupLabel>
          </Group>
          <Group $w={144}>
            <GroupBody $pad={5}>
              <RibbonBtn $w={78}><IconTransform /><span>Transform<br />data<Caret /></span></RibbonBtn>
              <RibbonBtn $w={46}><IconRefresh /><span>Refresh</span></RibbonBtn>
            </GroupBody>
            <GroupLabel>Queries</GroupLabel>
          </Group>
          <Group $w={184}>
            <GroupBody $pad={10}>
              <RibbonBtn $w={50}><IconNewVisual /><span>New<br />visual</span></RibbonBtn>
              <RibbonBtn $w={50}><IconTextBox /><span>Text<br />box</span></RibbonBtn>
              <RibbonBtn $w={60}><IconMoreVisuals /><span>More<br />visuals<Caret /></span></RibbonBtn>
            </GroupBody>
            <GroupLabel>Insert</GroupLabel>
          </Group>
          <Group $w={144}>
            <GroupBody $pad={9}>
              <RibbonBtn $w={62}><IconNewMeasure /><span>New<br />measure</span></RibbonBtn>
              <RibbonBtn $w={60}><IconQuickMeasure /><span>Quick<br />measure</span></RibbonBtn>
            </GroupBody>
            <GroupLabel>Calculations</GroupLabel>
          </Group>
          <Group $w={90}>
            <GroupBody $pad={3}>
              <RibbonBtn $w={80} $off><IconSensitivity /><span>Sensitivity<br /><Caret /></span></RibbonBtn>
            </GroupBody>
            <GroupLabel>Sensitivity</GroupLabel>
          </Group>
          <Group $w={74}>
            <GroupBody $pad={6}>
              <RibbonBtn $w={60}><IconPublish /><span>Publish</span></RibbonBtn>
            </GroupBody>
            <GroupLabel>Share</GroupLabel>
          </Group>
        </GroupRow>
      </Ribbon>

      <Main>
        <LeftPart>
          <WorkRow>
            <NavRail>
              <NavItem $on>
                <svg width="20" height="20" viewBox="0 0 20 20" fill="#d2d0ce" stroke="#323130" strokeWidth="1.2">
                  <path d="M1 1v18h18" fill="none" />
                  <rect x="4" y="7" width="3" height="9" />
                  <rect x="9" y="10" width="3" height="6" />
                  <rect x="14" y="4" width="3" height="12" />
                </svg>
              </NavItem>
              <NavItem>
                <svg width="22" height="20" viewBox="0 0 22 20" fill="none" stroke="#797775" strokeWidth="1.4">
                  <rect x="1" y="1" width="20" height="18" />
                  <path d="M1 5h20M1 10h20M1 15h20M8 5v14M14 5v14" />
                </svg>
              </NavItem>
              <NavItem>
                <svg width="24" height="24" viewBox="0 0 24 24" fill="#f3f2f1" stroke="#797775" strokeWidth="1.3">
                  <path d="M8 10V4h5M8 14v6h5" fill="none" />
                  <rect x="1" y="7" width="8" height="9" />
                  <path d="M1 11h8" />
                  <rect x="13" y="1" width="10" height="8" />
                  <path d="M13 4.5h10" />
                  <rect x="13" y="14" width="10" height="9" />
                  <path d="M13 18h10" />
                </svg>
              </NavItem>
            </NavRail>
            <Canvas>
              <Report>
                <Banner>Sales Dashboard</Banner>
                <ReportGrid>
                  <KpiGrid>
                    <Kpi>
                      <KpiTitle>Total Revenue</KpiTitle>
                      <KpiValue $size={55}>$2.30M</KpiValue>
                      <KpiSub>Sum of Sales</KpiSub>
                    </Kpi>
                    <Kpi>
                      <KpiTitle>Total Profits</KpiTitle>
                      <KpiValue $size={57}>286.40K</KpiValue>
                      <KpiSub>Sum of Profit</KpiSub>
                    </Kpi>
                    <Kpi>
                      <KpiTitle>Quantity Sold</KpiTitle>
                      <KpiValue $size={55}>38K</KpiValue>
                      <KpiSub>Sum of Quantity</KpiSub>
                    </Kpi>
                    <FilterCard>
                      <FilterTitle>Filter by Years</FilterTitle>
                      <YearInputs>
                        <YearBox>2011</YearBox>
                        <YearBox>2014</YearBox>
                      </YearInputs>
                      <Slider>
                        <Thumb />
                        <Thumb $right />
                      </Slider>
                    </FilterCard>
                  </KpiGrid>
                  <VisualCard $margin="1px 0">
                    <VisualTitle $top={1}>Sum of Sales and Sum of Profit by Year</VisualTitle>
                    <TopLegend $gap={9}>
                      <LegendItem $c={NAVY}>Sum of Sales</LegendItem>
                      <LegendItem $c="#41a4ff">Sum of Profit</LegendItem>
                    </TopLegend>
                    <YearChart />
                  </VisualCard>
                  <VisualCard $margin="1px 0">
                    <VisualTitle $top={1}>Sum of Sales by Order Year and Quarter</VisualTitle>
                    <TopLegend $gap={4}>
                      <b>Quarter</b>
                      {["Qtr 1", "Qtr 2", "Qtr 3", "Qtr 4"].map((q, i) => (
                        <LegendItem key={q} $c={QTR_COLORS[i]}>{q}</LegendItem>
                      ))}
                    </TopLegend>
                    <QuarterChart />
                  </VisualCard>

                  <MapCard>
                    <HoverBar>
                      <Funnel c="#8a8886" s={20} />
                      <svg width="20" height="18" viewBox="0 0 20 18" fill="none" stroke="#8a8886" strokeWidth="1.1">
                        <path d="M8 1H1v16h17v-7M1 9h8v8M12 1h7v7M19 1l-7 7" />
                      </svg>
                      <svg width="20" height="4" viewBox="0 0 20 4" fill="#605e5c">
                        <circle cx="3" cy="2" r="1.3" />
                        <circle cx="10" cy="2" r="1.3" />
                        <circle cx="17" cy="2" r="1.3" />
                      </svg>
                    </HoverBar>
                    <VisualTitle $top={2}>Sum of Sales by State</VisualTitle>
                    <UsMap />
                    {HANDLES.map((h) => (
                      <Handle key={h} $place={h} />
                    ))}
                    <Tooltip>
                      <span>State</span>
                      <b>Texas</b>
                      <span>Sum of Sales</span>
                      <b>$1,70,188.05</b>
                    </Tooltip>
                  </MapCard>
                  <VisualCard>
                    <VisualTitle $top={2}>Sum of Sales and Sum of Profit by Segment</VisualTitle>
                    <ChartRow>
                      <DonutChart />
                      <SideLegend $top={107}>
                        <b>Segment</b>
                        <LegendItem $c={SLICE_COLORS[0]}>Consumer</LegendItem>
                        <LegendItem $c={SLICE_COLORS[1]}>Corporate</LegendItem>
                        <LegendItem $c={SLICE_COLORS[2]}>Home Office</LegendItem>
                      </SideLegend>
                    </ChartRow>
                  </VisualCard>
                  <VisualCard $bare>
                    <VisualTitle $left={6}>Sum of Sales and Sum of Profit by Category</VisualTitle>
                    <ChartRow>
                      <PieChart />
                      <SideLegend $top={110}>
                        <b>Category</b>
                        <LegendItem $c={SLICE_COLORS[0]}>Technology</LegendItem>
                        <LegendItem $c={SLICE_COLORS[1]}>Furniture</LegendItem>
                        <LegendItem $c={SLICE_COLORS[2]}>Office Supplies</LegendItem>
                      </SideLegend>
                    </ChartRow>
                  </VisualCard>
                </ReportGrid>
              </Report>
            </Canvas>
            <FilterRail>
              <DoubleChevron />
              <span style={{ height: 19 }} />
              <Funnel />
              <VerticalLabel $top={10} $size={16.5} $ls={0.3}>Filters</VerticalLabel>
            </FilterRail>
          </WorkRow>
          <BottomBar>
            <ViewBtn $w={30} $top={9} $mr={32}>
              <svg width="24" height="20" viewBox="0 0 24 20" fill="none" stroke="#252423" strokeWidth="1.4">
                <rect x="1" y="1" width="22" height="13" />
                <path d="M12 14v4M7 18.5h10" />
              </svg>
              <ViewMark />
            </ViewBtn>
            <ViewBtn $w={15} $top={6} $mr={0}>
              <svg width="16" height="26" viewBox="0 0 16 26" fill="none" stroke="#605e5c" strokeWidth="1.4">
                <rect x="1" y="1" width="14" height="24" rx="2" />
                <path d="M7 21.5h2" />
              </svg>
            </ViewBtn>
            <Pager>
              <svg width="7" height="12" viewBox="0 0 7 12" fill="#c8ccd2"><path d="M7 0v12L0 6z" /></svg>
              <svg width="7" height="12" viewBox="0 0 7 12" fill="#c8ccd2"><path d="M0 0v12l7-6z" /></svg>
            </Pager>
            <PageTab>Overal Sales</PageTab>
            <AddPage>
              <svg width="15" height="15" viewBox="0 0 15 15" fill="none" stroke="#fff" strokeWidth="3.2">
                <path d="M7.5 1v13M1 7.5h13" />
              </svg>
            </AddPage>
          </BottomBar>
        </LeftPart>
        <VizRail>
          <DoubleChevron />
          <VerticalLabel $top={16} $size={18} $ls={0.45}>Visualizations</VerticalLabel>
        </VizRail>
        <DataPane>
          <DataHead>
            <span>Data</span>
            <DoubleChevron right />
          </DataHead>
          <SearchBox>
            <svg width="18" height="18" viewBox="0 0 18 18" fill="none" stroke="#323130" strokeWidth="1.2">
              <circle cx="11" cy="7" r="5.7" />
              <path d="M7 11l-6 6" />
            </svg>
            Search
          </SearchBox>
          <FieldList>
            <FieldRows>
              {FIELDS.map(([name, type, expand, on]) => (
                <FieldRow key={name}>
                  <Expander $on={expand}>
                    <svg width="9" height="14" viewBox="0 0 9 14" fill="none" stroke="#605e5c" strokeWidth="1">
                      <path d="M1 1l7 6-7 6" />
                    </svg>
                  </Expander>
                  <Check $on={on}>
                    {on && (
                      <svg width="11" height="9" viewBox="0 0 11 9" fill="none" stroke="#fff" strokeWidth="1.4">
                        <path d="M1 4.5l3 3 6-6" />
                      </svg>
                    )}
                  </Check>
                  <TypeIcon>{typeIcon(type)}</TypeIcon>
                  {name}
                </FieldRow>
              ))}
            </FieldRows>
          </FieldList>
          <ScrollThumb />
        </DataPane>
      </Main>
      <StatusEdge />
    </Page>
  );
}
